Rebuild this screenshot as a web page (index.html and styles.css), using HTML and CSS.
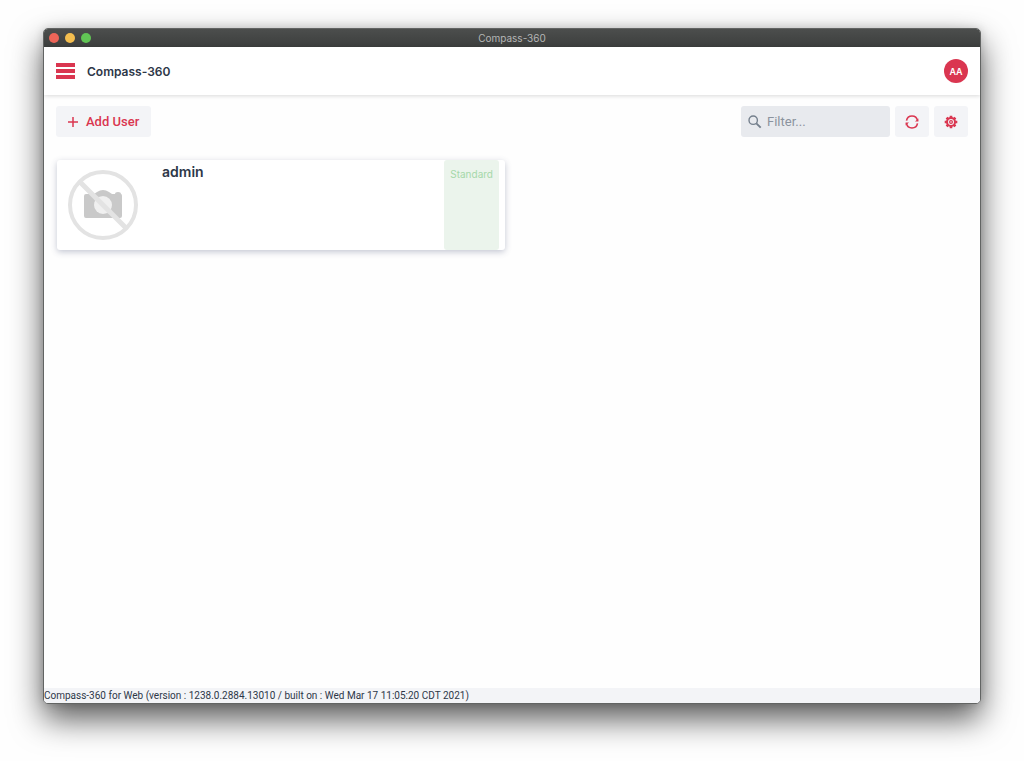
FILE: index.html
```html
<!DOCTYPE html>
<html lang="en">
<head>
  <meta charset="UTF-8" />
  <meta name="viewport" content="width=device-width, initial-scale=1.0"/>
  <title>Compass-360</title>
  <link rel="stylesheet" href="styles.css">
</head>
<body>
  <div class="window">
    <div class="titlebar">
      <div class="lights">
        <span class="light red"></span>
        <span class="light yellow"></span>
        <span class="light green"></span>
      </div>
      <span class="window-title">Compass-360</span>
    </div>

    <header class="header">
      <button class="menu-btn" aria-label="Menu">
        <svg width="19" height="16" viewBox="0 0 19 16" fill="#da3650">
          <rect width="19" height="4"/>
          <rect y="6" width="19" height="4"/>
          <rect y="12" width="19" height="4"/>
        </svg>
      </button>
      <h1>Compass-360</h1>
      <button class="avatar">AA</button>
    </header>

    <main class="content">
      <div class="toolbar">
        <button class="btn add-btn">
          <svg width="10" height="10" viewBox="0 0 10 10" fill="none" stroke="currentColor" stroke-width="1.5">
            <path d="M5 0v10M0 5h10"/>
          </svg>
          Add User
        </button>
        <div class="filter">
          <svg width="14" height="14" viewBox="0 0 14 14" fill="none" stroke="currentColor">
            <circle cx="5.2" cy="5.2" r="4.2" stroke-width="1.4"/>
            <path d="M8.3 8.3l4.4 4.4" stroke-width="1.9"/>
          </svg>
          <input type="text" placeholder="Filter..." aria-label="Filter">
        </div>
        <button class="btn icon-btn" aria-label="Refresh">
          <svg width="14" height="14" viewBox="0 0 14 14" fill="none" stroke="currentColor" stroke-width="1.6">
            <path d="M1.5 5.6a5.6 5.6 0 0 1 11 0M12.5 8.4a5.6 5.6 0 0 1-11 0"/>
            <path d="M13.4 3.4v3H10zM.6 10.6v-3H4z" fill="currentColor" stroke="none"/>
          </svg>
        </button>
        <button class="btn icon-btn" aria-label="Settings">
          <svg width="14" height="14" viewBox="0 0 14 14" fill="none" stroke="currentColor">
            <circle cx="7" cy="7" r="4" stroke-width="2"/>
            <circle cx="7" cy="7" r="1.4" stroke-width="1.2"/>
            <path d="M7 .7v2M7 11.3v2M.7 7h2M11.3 7h2M2.6 2.6L4 4M10 10l1.4 1.4M2.6 11.4L4 10M10 4l1.4-1.4" stroke-width="2.6"/>
          </svg>
        </button>
      </div>

      <div class="cards">
        <div class="card">
          <svg class="photo" width="70" height="70" viewBox="0 0 70 70">
            <path d="M18 24h8l3-2q6-4 12 0l3 2h3q0-2 3-2t3 2q1 0 1 2v20q0 2-2 2H18q-2 0-2-2V26q0-2 2-2z" fill="#c9c9c9"/>
            <path d="M12 12l46 46" stroke="#e3e3e3" stroke-width="5"/>
            <circle cx="35" cy="35" r="9" fill="#f0f0f0"/>
            <path d="M28 28l14 14" stroke="#e3e3e3" stroke-width="5"/>
            <circle cx="35" cy="35" r="33" fill="none" stroke="#e3e3e3" stroke-width="4"/>
          </svg>
          <h2>admin</h2>
          <span class="tag">Standard</span>
        </div>
      </div>
    </main>

    <footer class="footer">Compass-360 for Web (version : 1238.0.2884.13010 / built on : Wed Mar 17 11:05:20 CDT 2021)</footer>
  </div>
</body>
</html>
```

FILE: styles.css
```css
* {
  box-sizing: border-box;
}

body {
  margin: 0;
  min-height: 100vh;
  padding: 28px 43px 57px;
  display: flex;
  background: #fefefe;
  font-family: Inter, "Liberation Sans", sans-serif;
  color: #2d3748;
}

button {
  border: none;
  padding: 0;
  font-family: inherit;
  cursor: pointer;
}

svg {
  display: block;
  flex-shrink: 0;
}

.window {
  flex: 1;
  display: flex;
  flex-direction: column;
  border: 1px solid #626463;
  border-radius: 5px;
  background: #fefefe;
  overflow: hidden;
  box-shadow: 0 15px 32px rgba(0, 0, 0, 0.65), 0 0 10px rgba(0, 0, 0, 0.15);
}

.titlebar {
  display: grid;
  grid-template-columns: 1fr auto 1fr;
  align-items: center;
  height: 18px;
  padding: 0 5px;
  background: linear-gradient(#4c4e4d, #3c3e3d);
}

.lights {
  display: flex;
  gap: 6px;
}

.light {
  width: 10px;
  height: 10px;
  border-radius: 50%;
}

.red {
  background: #ed6558;
}

.yellow {
  background: #f4be4f;
}

.green {
  background: #61c555;
}

.window-title {
  font-size: 10px;
  color: #b5b6b6;
}

.header {
  display: flex;
  align-items: center;
  gap: 12px;
  height: 48px;
  padding: 0 12px;
  background: #fff;
  box-shadow: 0 1px 4px rgba(0, 0, 0, 0.15);
}

.menu-btn {
  background: none;
}

h1 {
  margin: 0;
  font-size: 12px;
  font-weight: 600;
}

.avatar {
  width: 24px;
  height: 24px;
  margin-left: auto;
  border-radius: 50%;
  background: #da3650;
  color: #fff;
  font-size: 9px;
  font-weight: 600;
}

.content {
  flex: 1;
  padding: 11px 12px;
}

.toolbar {
  display: flex;
  gap: 5px;
}

.btn {
  display: flex;
  align-items: center;
  justify-content: center;
  height: 31px;
  border-radius: 3px;
  background: #f3f4f7;
  color: #da3650;
}

.add-btn {
  gap: 8px;
  margin-right: auto;
  padding: 0 12px;
  font-family: Roboto, "Liberation Sans", sans-serif;
  font-size: 13px;
  font-weight: 500;
}

.icon-btn {
  width: 34px;
}

.filter {
  display: flex;
  align-items: center;
  gap: 5px;
  width: 149px;
  height: 31px;
  padding: 0 7px;
  border-radius: 3px;
  background: #e8eaee;
  color: #75808d;
}

.filter input {
  flex: 1;
  min-width: 0;
  padding: 0;
  border: none;
  outline: none;
  background: none;
  color: #2d3748;
  font-family: Roboto, "Liberation Sans", sans-serif;
  font-size: 13px;
}

.filter input::placeholder {
  color: #8b939e;
}

.cards {
  display: grid;
  grid-template-columns: 1fr 1fr;
  gap: 14px;
  padding: 23px 1px;
}

.card {
  display: flex;
  height: 90px;
  padding: 0 6px 0 11px;
  border-radius: 3px;
  background: #fff;
  box-shadow: 0 2px 6px rgba(60, 70, 110, 0.3);
}

.photo {
  align-self: center;
}

h2 {
  flex: 1;
  margin: 2px 0 0 24px;
  font-size: 14px;
  line-height: 20px;
  font-weight: 600;
}

.tag {
  padding: 8px 6px;
  border-radius: 3px;
  background: #ebf4ec;
  color: #a5d8a9;
  font-size: 10px;
}

.footer {
  height: 15px;
  background: #f3f4f7;
  font-family: Roboto, "Liberation Sans", sans-serif;
  font-size: 10px;
  line-height: 15px;
}
```
